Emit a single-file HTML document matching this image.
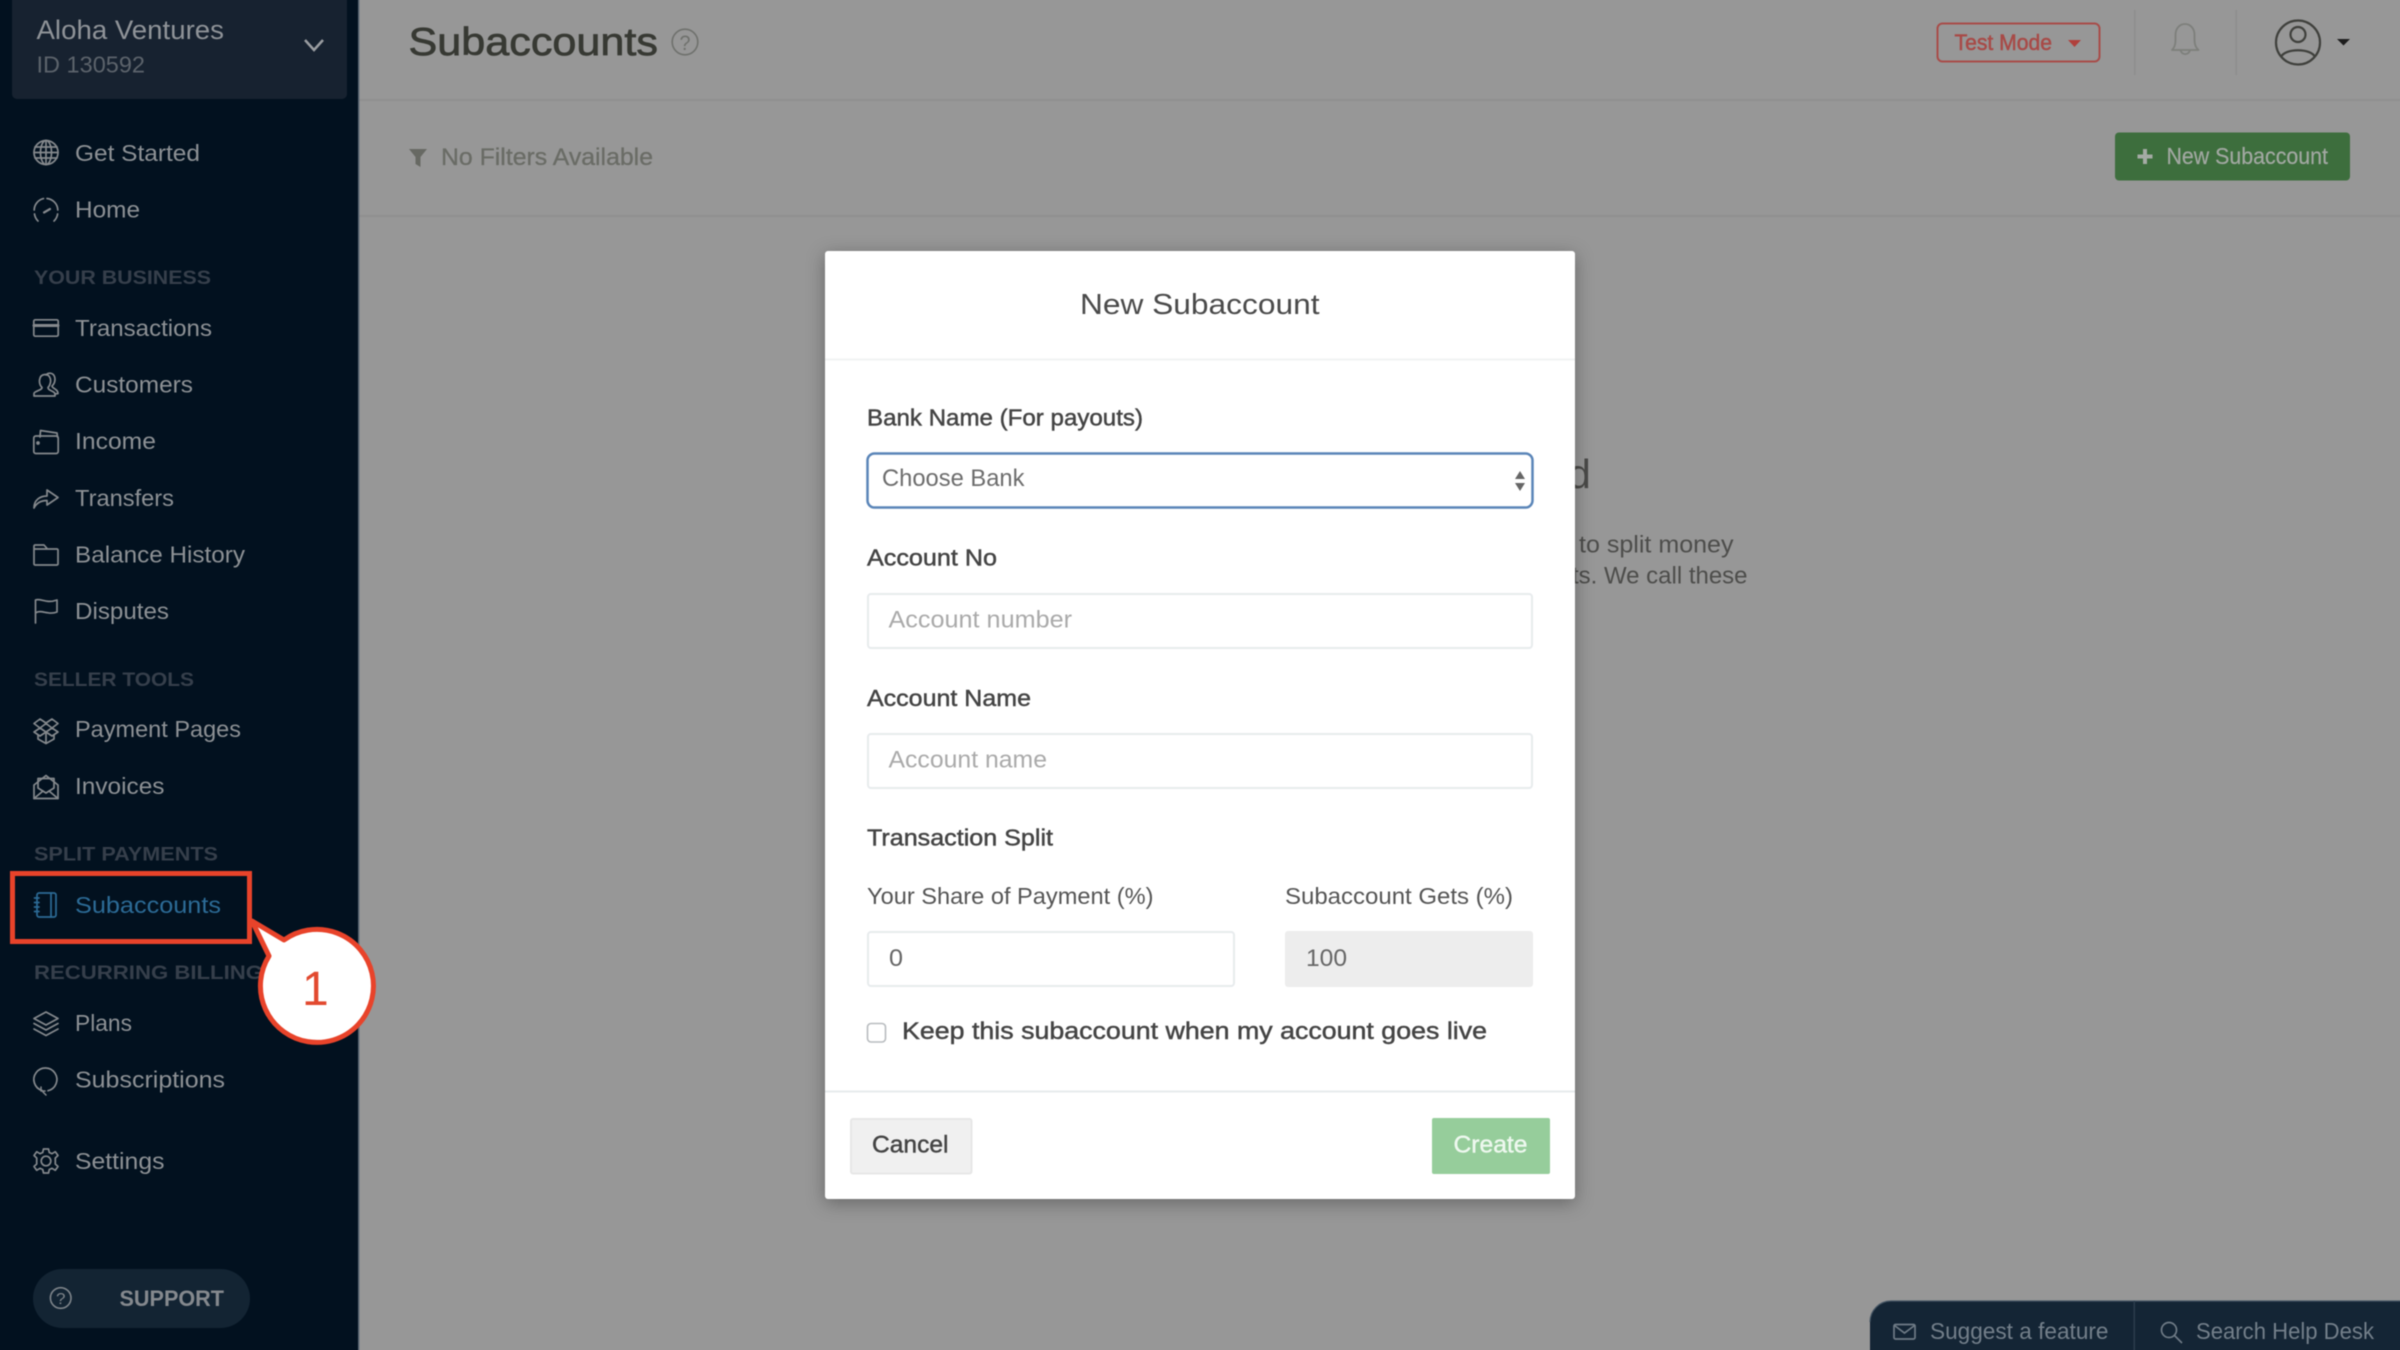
<!DOCTYPE html>
<html lang="en"><head><meta charset="utf-8"><title>Subaccounts</title>
<style>
html,body{margin:0;padding:0;width:2400px;height:1350px;overflow:hidden;background:#979797}
#w{position:absolute;left:0;top:0;width:2400px;height:1350px;overflow:hidden}
svg{display:block;position:absolute;left:-10px;top:-10px;filter:blur(.55px)}
text{font-family:"Liberation Sans",sans-serif;white-space:pre}
.n{font-size:23.5px;fill:#8d9195}
.s{font-size:19.5px;fill:#363f4b;font-weight:bold}
.i{fill:none;stroke:#85898d;stroke-width:1.7;stroke-linecap:round;stroke-linejoin:round}
.l{font-size:23px;fill:#444;stroke:#444;stroke-width:.45}
.p{font-size:24px;fill:#aaa}
.f{fill:#fff;stroke:#e7ebed;stroke-width:2}
</style></head><body>
<div id="w">
<svg width="2420" height="1370" viewBox="-10 -10 2420 1370" xmlns="http://www.w3.org/2000/svg">
<rect x="-10" y="-10" width="2420" height="1370" fill="#979797"/>
<!-- main lines -->
<rect x="359" y="99" width="2051" height="2" fill="#8f8f8f"/>
<rect x="359" y="215" width="2051" height="2" fill="#8f8f8f"/>
<!-- header -->
<text x="408.5" y="55" font-size="39" fill="#373933" stroke="#373933" stroke-width=".7" textLength="249.5" lengthAdjust="spacingAndGlyphs">Subaccounts</text>
<circle cx="685" cy="42" r="12.8" fill="none" stroke="#6f716d" stroke-width="1.6"/>
<text x="679.5" y="50" font-size="21" fill="#6f716d" textLength="11" lengthAdjust="spacingAndGlyphs">?</text>
<path d="M409 149H427L420.5 157V167L415.5 164V157Z" fill="#676963"/>
<text x="441" y="165" font-size="24" fill="#6a6c66" stroke="#6a6c66" stroke-width=".3" textLength="212" lengthAdjust="spacingAndGlyphs">No Filters Available</text>
<rect x="1937.5" y="23.5" width="162" height="38" rx="5" fill="none" stroke="#a84c49" stroke-width="2"/>
<text x="1954.5" y="50" font-size="22" fill="#a84a47" stroke="#a84a47" stroke-width=".5" textLength="97.5" lengthAdjust="spacingAndGlyphs">Test Mode</text>
<path d="M2068 40H2081L2074.5 47Z" fill="#b0403c"/>
<rect x="2134" y="10" width="1.5" height="65" fill="#8d8d8d"/>
<rect x="2235.5" y="10" width="1.5" height="65" fill="#8d8d8d"/>
<g fill="none" stroke="#7d7f7b" stroke-width="1.8" stroke-linejoin="round">
<path d="M2172 50C2176 46 2175.5 41 2175.5 35C2175.5 28 2180 24 2185 24C2190 24 2194.5 28 2194.5 35C2194.5 41 2194 46 2198.5 50Z"/>
<path d="M2180.5 50A4.8 4.8 0 0 0 2190 50"/>
</g>
<g fill="none" stroke="#3f403c" stroke-width="2.2">
<circle cx="2298" cy="42.5" r="22"/>
<circle cx="2298" cy="34.5" r="7.5"/>
<path d="M2281 57C2285 48 2311 48 2315 57"/>
</g>
<path d="M2337 39H2350L2343.5 45.5Z" fill="#1d1d1d"/>
<rect x="2115" y="132.5" width="235" height="48" rx="4" fill="#3d6e3d"/>
<path d="M2145 149V164M2137.5 156.5H2152.5" stroke="#a5aba5" stroke-width="4"/>
<text x="2166.5" y="164" font-size="23" fill="#a2a8a2" stroke="#a2a8a2" stroke-width=".2" textLength="161.5" lengthAdjust="spacingAndGlyphs">New Subaccount</text>
<!-- text behind modal -->
<text x="1568" y="488" font-size="41" fill="#4a4a48">d</text>
<text x="1579" y="552.5" font-size="24.5" fill="#4d4d4b" textLength="154.5" lengthAdjust="spacingAndGlyphs">to split money</text>
<text x="1572" y="583.5" font-size="24.5" fill="#4d4d4b" textLength="175.5" lengthAdjust="spacingAndGlyphs">ts. We call these</text>
<!-- bottom bar -->
<path d="M1870 1360V1322A21 21 0 0 1 1891 1301H2410V1360Z" fill="#142535"/>
<path d="M1870 1322A21 21 0 0 1 1891 1301H2410" fill="none" stroke="#465665" stroke-width="1.2"/>
<rect x="2133.5" y="1301" width="1.5" height="59" fill="#2b3c4c"/>
<g fill="none" stroke="#6f7b86" stroke-width="1.7">
<rect x="1894" y="1324.5" width="21" height="14.5" rx="1.5"/>
<path d="M1894.5 1325.5L1904.5 1333L1914.5 1325.5"/>
<circle cx="2169" cy="1330" r="7.5"/>
<path d="M2174.5 1335.5L2182 1343"/>
</g>
<text x="1930" y="1339" font-size="23" fill="#737f8a" textLength="178.5" lengthAdjust="spacingAndGlyphs">Suggest a feature</text>
<text x="2196" y="1339" font-size="23" fill="#737f8a" textLength="178" lengthAdjust="spacingAndGlyphs">Search Help Desk</text>

<!-- sidebar -->
<rect x="-10" y="-10" width="368" height="1370" fill="#02111f"/>
<rect x="358" y="-10" width="1.5" height="1370" fill="#5c6875"/>
<path d="M12 -10H347V94A5 5 0 0 1 342 99H17A5 5 0 0 1 12 94Z" fill="#172230"/>
<text x="36.5" y="39" font-size="26.5" fill="#8f9398" textLength="187.5" lengthAdjust="spacingAndGlyphs">Aloha Ventures</text>
<text x="36.5" y="72.5" font-size="23.5" fill="#5c636b" textLength="108.5" lengthAdjust="spacingAndGlyphs">ID 130592</text>
<path d="M305 40L314 50L323 40" fill="none" stroke="#9a9da1" stroke-width="2.5"/>

<text class="n" x="75" y="161" textLength="125" lengthAdjust="spacingAndGlyphs">Get Started</text>
<text class="n" x="75" y="217.5" textLength="65" lengthAdjust="spacingAndGlyphs">Home</text>
<text class="s" x="34" y="284" textLength="177" lengthAdjust="spacingAndGlyphs">YOUR BUSINESS</text>
<text class="n" x="75" y="336" textLength="137" lengthAdjust="spacingAndGlyphs">Transactions</text>
<text class="n" x="75" y="392.5" textLength="118" lengthAdjust="spacingAndGlyphs">Customers</text>
<text class="n" x="75" y="449" textLength="81" lengthAdjust="spacingAndGlyphs">Income</text>
<text class="n" x="75" y="506" textLength="99" lengthAdjust="spacingAndGlyphs">Transfers</text>
<text class="n" x="75" y="562.5" textLength="170" lengthAdjust="spacingAndGlyphs">Balance History</text>
<text class="n" x="75" y="619" textLength="94" lengthAdjust="spacingAndGlyphs">Disputes</text>
<text class="s" x="34" y="686" textLength="160" lengthAdjust="spacingAndGlyphs">SELLER TOOLS</text>
<text class="n" x="75" y="737" textLength="166" lengthAdjust="spacingAndGlyphs">Payment Pages</text>
<text class="n" x="75" y="794" textLength="89.5" lengthAdjust="spacingAndGlyphs">Invoices</text>
<text class="s" x="34" y="860.5" textLength="184" lengthAdjust="spacingAndGlyphs">SPLIT PAYMENTS</text>
<text class="n" x="75" y="913" textLength="146" lengthAdjust="spacingAndGlyphs" style="fill:#2c6b96">Subaccounts</text>
<text class="s" x="34" y="979" textLength="229" lengthAdjust="spacingAndGlyphs">RECURRING BILLING</text>
<text class="n" x="75" y="1031" textLength="57" lengthAdjust="spacingAndGlyphs">Plans</text>
<text class="n" x="75" y="1087.5" textLength="150" lengthAdjust="spacingAndGlyphs">Subscriptions</text>
<text class="n" x="75" y="1169" textLength="89.5" lengthAdjust="spacingAndGlyphs">Settings</text>

<!-- icons -->
<g class="i">
<g transform="translate(33,140)"><circle cx="13" cy="12.5" r="12"/><ellipse cx="13" cy="12.5" rx="5.5" ry="12"/><path d="M13 .5V24.5M2 7H24M1 12.5H25M2 18H24"/></g>
<g transform="translate(33,198)"><path d="M5 23A12 12 0 0 1 1.5 16M1.2 12A12 12 0 0 1 10.5 .6M14 .5A12 12 0 0 1 24.8 12M24.6 16A12 12 0 0 1 21 23"/><path d="M11 14.5L17 11" stroke-width="2.2"/></g>
<g transform="translate(33,319)"><rect x=".8" y=".8" width="24.4" height="16.4" rx="1.5"/><path d="M1 6.5H25" stroke-width="3"/></g>
<g transform="translate(33,372)"><path d="M1 24V21.5C1 19 9 18.5 9 15.5C5.5 12 5 3 12 2.5C16 2.3 18 6 17.5 10C17 13 16 14.5 15 15.5C15 19 22 19 22 22V24Z"/><path d="M13 3C15 .5 19 .5 21 3.5C22.5 6 22.5 11 19 14C19 16.5 25 17 25 21.5L22 22"/></g>
<g transform="translate(33,429)"><path d="M7 8L7.5 1.5L24 4L24.5 8"/><rect x=".8" y="7" width="24.4" height="17.5" rx="2"/><circle cx="5" cy="14" r="1" fill="#85898d"/></g>
<g transform="translate(33,486)"><path d="M1 22C1 14 7 10 14 10V4L25 11.5L14 19V14.5C8 14.5 3.5 17 1 22Z"/></g>
<g transform="translate(33,544)"><path d="M1 5V2C1 1.5 1.5 1 2 1H11L14.5 5H24C24.5 5 25 5.5 25 6V20C25 20.5 24.5 21 24 21H2C1.5 21 1 20.5 1 20V5H14.5"/></g>
<g transform="translate(33,598)"><path d="M2.5 25V2C8 0 13 6 24 2V14C15 17.5 8 11 2.5 15"/></g>
<g transform="translate(33,718)"><path d="M7 1L13 5L19 1L25 5.5L19 10L25 14L19 18L13 14L7 18L1 14L7 10L1 5.5ZM7 10L13 5.5L19 10L13 14Z"/><path d="M5 17V21L13 25.5L21 21V17M13 25.5V15"/></g>
<g transform="translate(33,774)"><path d="M1 11V24.5H25V11L13 1.5Z"/><path d="M5 14V4.5H21V14L13 19Z"/><path d="M1 24.5L10 17M25 24.5L16 17"/></g>
<g transform="translate(33,892)" style="stroke:#2c6b96"><rect x="4" y="1" width="19" height="24" rx="2"/><path d="M18 1V25M1.5 6H6M1.5 10.5H6M1.5 15H6M1.5 19.5H6"/></g>
<g transform="translate(33,1011)"><path d="M13 1L25 7.5L13 14L1 7.5Z"/><path d="M1 12.5L13 19L25 12.5"/><path d="M1 18L13 24.5L25 18"/></g>
<g transform="translate(33,1067)"><path d="M9 23.5A11.5 11.5 0 1 1 15 23.7"/><path d="M8 20V24H12M10 25L13 28" stroke-width="1.5"/></g>
<g transform="translate(33,1148)"><circle cx="13" cy="13" r="4.8"/><path d="M10.5 1H15.5L16.3 4.5L19 5.7L22.3 3.7L25 7.5L22.3 10L22.3 16L25 18.5L22.3 22.3L19 20.3L16.3 21.5L15.5 25H10.5L9.7 21.5L7 20.3L3.7 22.3L1 18.5L3.7 16L3.7 10L1 7.5L3.7 3.7L7 5.7L9.7 4.5Z"/></g>
</g>

<!-- support -->
<rect x="33" y="1269" width="217" height="59" rx="29.5" fill="#132433"/>
<circle cx="60.7" cy="1298" r="10.3" fill="none" stroke="#7f858b" stroke-width="1.6"/>
<text x="56" y="1304" font-size="16" fill="#7f858b" textLength="9.5" lengthAdjust="spacingAndGlyphs">?</text>
<text x="119.5" y="1306" font-size="22" font-weight="bold" fill="#85898e" textLength="104.5" lengthAdjust="spacingAndGlyphs">SUPPORT</text>

<!-- selection + callout -->
<rect x="12.5" y="873.5" width="237" height="68" fill="none" stroke="#e8432a" stroke-width="5"/>
<path d="M252 921L284 940A56.5 56.5 0 1 1 269 956Z" fill="#fff" stroke="#e8432a" stroke-width="5" stroke-linejoin="round"/>
<text x="302" y="1005" font-size="48" fill="#e2492f">1</text>

<!-- modal -->
<g style="filter:drop-shadow(0 4px 9px rgba(0,0,0,.32))"><rect x="825" y="251" width="750" height="948" rx="3" fill="#fff"/></g>
<rect x="825" y="358.5" width="750" height="2" fill="#f1f3f3"/>
<text x="1080" y="314" font-size="29" fill="#4a4a4a" textLength="239.5" lengthAdjust="spacingAndGlyphs">New Subaccount</text>

<text class="l" x="867" y="425.5" textLength="276" lengthAdjust="spacingAndGlyphs">Bank Name (For payouts)</text>
<rect x="867.5" y="453.5" width="665" height="54" rx="7" fill="#fff" stroke="#5a85b8" stroke-width="2.5"/>
<text x="882" y="486" font-size="24" fill="#6d6d6d" textLength="142.5" lengthAdjust="spacingAndGlyphs">Choose Bank</text>
<path d="M1515 479L1520 471L1525 479ZM1515 483H1525L1520 491Z" fill="#666"/>

<text class="l" x="867" y="565.5" textLength="130" lengthAdjust="spacingAndGlyphs">Account No</text>
<rect class="f" x="868" y="594" width="664" height="54" rx="3"/>
<text class="p" x="888.5" y="627.5" textLength="183.5" lengthAdjust="spacingAndGlyphs">Account number</text>

<text class="l" x="867" y="706" textLength="164" lengthAdjust="spacingAndGlyphs">Account Name</text>
<rect class="f" x="868" y="734" width="664" height="54" rx="3"/>
<text class="p" x="888.5" y="767.5" textLength="158.5" lengthAdjust="spacingAndGlyphs">Account name</text>

<text class="l" x="867" y="845.5" textLength="186" lengthAdjust="spacingAndGlyphs">Transaction Split</text>
<text x="867" y="904" font-size="23" fill="#555" textLength="286.5" lengthAdjust="spacingAndGlyphs">Your Share of Payment (%)</text>
<text x="1285" y="904" font-size="23" fill="#555" textLength="228" lengthAdjust="spacingAndGlyphs">Subaccount Gets (%)</text>
<rect class="f" x="868" y="932" width="366" height="54" rx="3"/>
<text x="889" y="966" font-size="24" fill="#666" textLength="14" lengthAdjust="spacingAndGlyphs">0</text>
<rect x="1285" y="931" width="248" height="56" rx="3" fill="#ededed"/>
<text x="1306" y="966" font-size="24" fill="#666" textLength="41" lengthAdjust="spacingAndGlyphs">100</text>

<rect x="867.5" y="1023.5" width="18" height="18.5" rx="3.5" fill="#fff" stroke="#b8bcbf" stroke-width="1.6"/>
<text class="l" x="902" y="1039" style="font-size:24.5px" textLength="585" lengthAdjust="spacingAndGlyphs">Keep this subaccount when my account goes live</text>

<rect x="825" y="1090.5" width="750" height="2" fill="#e7ebed"/>
<rect x="851" y="1119" width="120.5" height="54.5" rx="2" fill="#f0f0f0" stroke="#e7e7e7" stroke-width="2"/>
<text class="l" x="872" y="1152.5" style="font-size:24px" textLength="76.5" lengthAdjust="spacingAndGlyphs">Cancel</text>
<rect x="1432" y="1118" width="118" height="56" rx="2" fill="#96cd9b"/>
<text x="1453.5" y="1152.5" font-size="24" fill="#eef8ef" stroke="#eef8ef" stroke-width=".4" textLength="74" lengthAdjust="spacingAndGlyphs">Create</text>
</svg>
</div>
</body></html>
